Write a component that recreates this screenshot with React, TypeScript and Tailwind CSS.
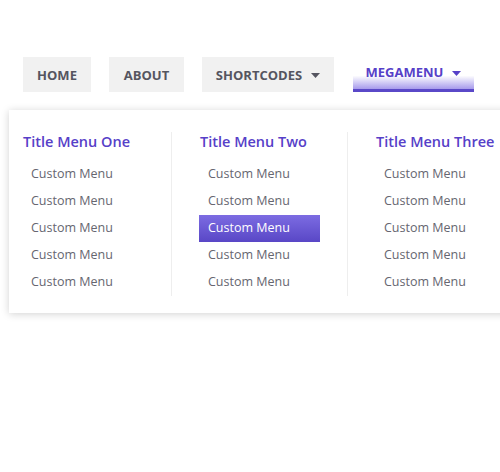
import React from "react";

const columns = [
  { title: "Title Menu One", active: -1 },
  { title: "Title Menu Two", active: 2 },
  { title: "Title Menu Three", active: -1 },
];

function Caret() {
  return (
    <svg width="9" height="5" viewBox="0 0 9 5" className="ml-[9px] inline-block">
      <path d="M0 0h9L4.5 5z" fill="currentColor" />
    </svg>
  );
}

export default function App() {
  return (
    <div
      className="h-[472px] w-[500px] overflow-hidden bg-white pt-[57px]"
      style={{ fontFamily: '"Open Sans", "Noto Sans", sans-serif' }}
    >
      <nav className="ml-[23px] flex text-[13px] font-bold text-[#555560]">
        <a className="flex h-[35px] w-[68px] items-center justify-center bg-[#f1f1f1] pt-[2px]">HOME</a>
        <a className="ml-[18px] flex h-[35px] w-[75px] items-center justify-center bg-[#f1f1f1] pt-[2px]">
          ABOUT
        </a>
        <a className="ml-[18px] flex h-[35px] w-[132px] items-center justify-center bg-[#f1f1f1] pt-[2px]">
          SHORTCODES
          <Caret />
        </a>
        <a className="ml-[19px] flex h-[35px] w-[121px] items-center justify-center border-b-[3px] border-[#5a48c8] bg-[linear-gradient(to_bottom,#fff_58%,#a79bec)] text-[#5640c8]">
          MEGAMENU
          <Caret />
        </a>
      </nav>

      <div className="ml-[9px] mt-[18px] flex w-[540px] bg-white px-[14px] pb-[17px] pt-[22px] shadow-[0_1px_8px_rgba(0,0,0,0.18)]">
        {columns.map((col, ci) => (
          <div
            key={col.title}
            className={
              ci === 0
                ? "w-[149px] border-r border-[#eeeeee]"
                : ci === 1
                  ? "w-[176px] border-r border-[#eeeeee] pl-[28px]"
                  : "w-[176px] pl-[28px]"
            }
          >
            <h3 className="mb-[9px] h-[20px] text-[14.5px] font-semibold leading-[20px] text-[#5640c8]">
              {col.title}
            </h3>
            <ul>
              {[0, 1, 2, 3, 4].map((i) => (
                <li
                  key={i}
                  className={
                    i === col.active
                      ? "ml-[-1px] flex h-[27px] w-[121px] items-center bg-[linear-gradient(to_bottom,#7c6ce2,#5947c6)] pl-[9px] text-[12.5px] text-white"
                      : "flex h-[27px] items-center pl-[8px] text-[12.5px] text-[#666670]"
                  }
                >
                  Custom Menu
                </li>
              ))}
            </ul>
          </div>
        ))}
      </div>
    </div>
  );
}
